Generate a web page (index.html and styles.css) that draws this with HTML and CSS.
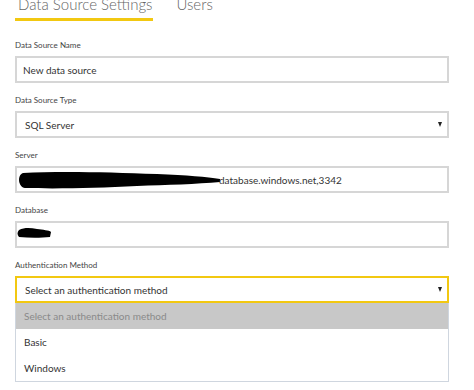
FILE: index.html
```html
<!DOCTYPE html>
<html lang="en">

<head>
  <meta charset="UTF-8">
  <title>Data Source Settings</title>
  <link rel="stylesheet" href="styles.css">
</head>

<body>
  <div class="panel">
    <div class="tabs">
      <div class="tab active">Data Source Settings</div>
      <div class="tab">Users</div>
    </div>

    <div class="field">
      <div class="label">Data Source Name</div>
      <div class="input">New data source</div>
    </div>

    <div class="field">
      <div class="label">Data Source Type</div>
      <div class="input select">SQL Server<span class="arrow"></span></div>
    </div>

    <div class="field">
      <div class="label">Server</div>
      <div class="input redacted">
        <svg class="scribble" width="203" height="18" viewBox="0 0 203 18">
          <path d="M6 2 C40 0 90 1 140 3 C170 4 190 6 203 8 L203 11 C180 13 150 14 120 15 C80 17 40 18 8 17 C1 16 0 4 6 2 Z" fill="#000"/>
        </svg>
        <span>database.windows.net,3342</span>
      </div>
    </div>

    <div class="field">
      <div class="label">Database</div>
      <div class="input redacted">
        <svg class="blob" width="34" height="11" viewBox="0 0 34 11">
          <path d="M2 3 C8 0 14 1 20 2 C26 3 32 3 34 5 L33 10 C24 11 12 11 2 10 C0 8 0 5 2 3 Z" fill="#000"/>
        </svg>
      </div>
    </div>

    <div class="field">
      <div class="label">Authentication Method</div>
      <div class="input select focused">Select an authentication method<span class="arrow"></span></div>
      <div class="options">
        <div class="option placeholder">Select an authentication method</div>
        <div class="option">Basic</div>
        <div class="option">Windows</div>
      </div>
    </div>

    <div class="buttons">
      <div class="btn primary"></div>
      <div class="btn"></div>
    </div>
  </div>
</body>

</html>
```

FILE: styles.css
```css
body {
  margin: 0;
  background: #fff;
  font-family: Lato, "Noto Sans", sans-serif;
  color: #333;
  overflow: hidden;
}

.panel {
  width: 434px;
  padding-left: 15px;
}

.tabs {
  display: flex;
  gap: 20px;
  margin-top: -7px;
  margin-bottom: 17px;
}

.tab {
  font-weight: 300;
  font-size: 15px;
  line-height: 22px;
  color: #666;
  padding: 0 1px 3px 3px;
  border-bottom: 3px solid transparent;
}

.tab.active {
  border-bottom-color: #f2c811;
}

.field {
  margin-bottom: 10px;
}

.label {
  font-size: 8px;
  line-height: 14px;
  color: #444;
  margin-bottom: 4px;
}

.input {
  box-sizing: border-box;
  height: 27px;
  border: 2px solid #d6d6d6;
  padding: 0 6px;
  display: flex;
  align-items: center;
  font-size: 10px;
  color: #333;
}

.select {
  justify-content: space-between;
  padding-left: 8px;
  padding-right: 5px;
}

.arrow {
  width: 0;
  height: 0;
  border-left: 2.5px solid transparent;
  border-right: 2.5px solid transparent;
  border-top: 5px solid #222;
}

.focused {
  border-color: #f2c811;
}

.redacted {
  padding-left: 0;
}

.scribble {
  margin-right: -1px;
}

.blob {
  margin-top: -4px;
}

.options {
  border: 1px solid #cfd6df;
  border-top: none;
}

.option {
  height: 26px;
  display: flex;
  align-items: center;
  padding-left: 8px;
  font-size: 10px;
  color: #333;
}

.option.placeholder {
  background: #c8c8c8;
  color: #8a8a8a;
}

.buttons {
  display: flex;
  gap: 3px;
}

.btn {
  width: 62px;
  height: 6px;
  background: #e8e8e8;
}

.btn.primary {
  width: 47px;
  background: #f2c811;
}
```
